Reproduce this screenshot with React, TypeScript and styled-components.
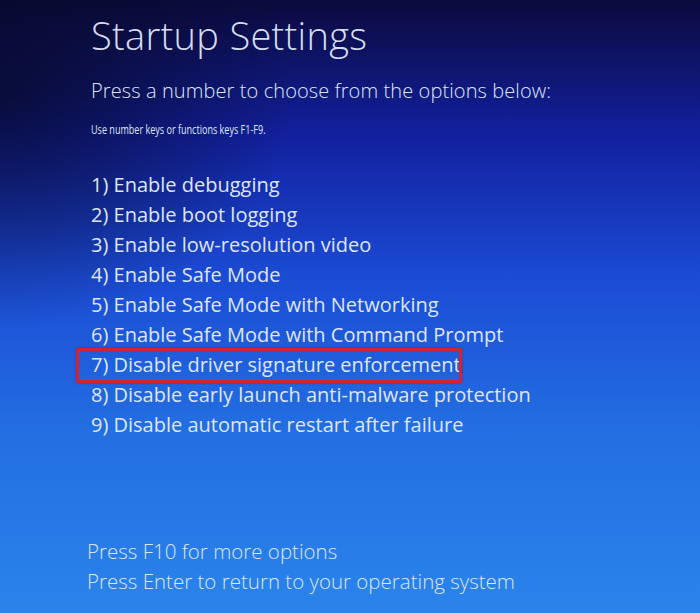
import * as React from 'react';
import styled, { createGlobalStyle } from 'styled-components';

const GlobalStyle = createGlobalStyle`
  html, body {
    margin: 0;
    padding: 0;
  }
  body {
    font-family: 'Open Sans', 'Noto Sans', sans-serif;
  }
`;

const Screen = styled.div`
  width: 700px;
  height: 613px;
  overflow: hidden;
  box-sizing: border-box;
  padding: 12px 0 0 91px;
  display: flex;
  flex-direction: column;
  color: #dfe6f6;
  background:
    radial-gradient(ellipse 60% 55% at 0% 15%, rgba(6, 8, 34, 0.75), rgba(6, 8, 34, 0) 70%),
    linear-gradient(180deg, #0b0a3c 0%, #12209e 22%, #1b4bd4 45%, #236ee2 70%, #2a84ea 100%);
`;

const Title = styled.h1`
  margin: 0;
  font-weight: 300;
  font-size: 38px;
  line-height: 46px;
  letter-spacing: 0.3px;
  color: #d6ddee;
`;

const Prompt = styled.p`
  margin: 20px 0 0;
  font-weight: 300;
  font-size: 20px;
  line-height: 26px;
  letter-spacing: 0.1px;
`;

const Hint = styled.p`
  margin: 17px 0 0;
  font-size: 13.5px;
  line-height: 16px;
  transform: scaleX(0.67);
  transform-origin: left center;
  white-space: nowrap;
`;

const Options = styled.ol`
  list-style: none;
  margin: 33px 0 0;
  padding: 0;
  display: flex;
  flex-direction: column;
`;

const Option = styled.li<{ $selected?: boolean }>`
  font-size: 20px;
  font-weight: 400;
  line-height: 30px;
  height: 30px;
  position: relative;
  &::before {
    content: '';
    display: ${(p) => (p.$selected ? 'block' : 'none')};
    position: absolute;
    left: -15px;
    top: -2px;
    width: 386px;
    height: 35px;
    box-sizing: border-box;
    border: 3px solid #d8202e;
    border-radius: 2px;
    box-shadow: 0 0 2px rgba(120, 0, 20, 0.6);
  }
`;

const Footer = styled.div`
  margin: auto 0 0 -4px;
  padding-bottom: 17px;
  display: flex;
  flex-direction: column;
`;

const FooterLine = styled.div`
  font-size: 20.5px;
  font-weight: 300;
  line-height: 30px;
`;

const options = [
  'Enable debugging',
  'Enable boot logging',
  'Enable low-resolution video',
  'Enable Safe Mode',
  'Enable Safe Mode with Networking',
  'Enable Safe Mode with Command Prompt',
  'Disable driver signature enforcement',
  'Disable early launch anti-malware protection',
  'Disable automatic restart after failure',
];

export default function App() {
  return (
    <>
      <GlobalStyle />
      <Screen>
        <Title>Startup Settings</Title>
        <Prompt>Press a number to choose from the options below:</Prompt>
        <Hint>Use number keys or functions keys F1-F9.</Hint>
        <Options>
          {options.map((label, i) => (
            <Option key={i} $selected={i === 6}>
              {i + 1}) {label}
            </Option>
          ))}
        </Options>
        <Footer>
          <FooterLine>Press F10 for more options</FooterLine>
          <FooterLine>Press Enter to return to your operating system</FooterLine>
        </Footer>
      </Screen>
    </>
  );
}
